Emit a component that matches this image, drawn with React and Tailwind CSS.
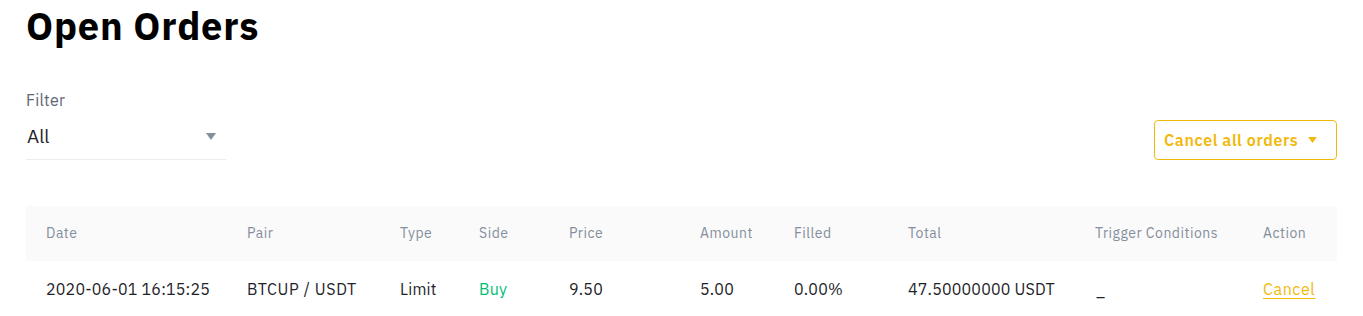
import React from "react";

const font = { fontFamily: '"IBM Plex Sans", "Open Sans", "Noto Sans", sans-serif' };

function Caret({ className }) {
  return (
    <svg viewBox="0 0 10 7" className={className} fill="currentColor">
      <path d="M0 0h10L5 7z" />
    </svg>
  );
}

const headers = ["Date", "Pair", "Type", "Side", "Price", "Amount", "Filled", "Total", "Trigger Conditions", "Action"];

export default function App() {
  return (
    <div className="bg-white w-[1363px] h-[316px] overflow-hidden px-[26px] font-['Open_Sans',sans-serif]" style={font}>
      <h1 className="pt-[2px] text-[38px] leading-[48px] font-bold text-[#000] tracking-[0.8px]">Open Orders</h1>
      <div className="mt-[40px] flex items-end justify-between">
        <div className="w-[200px]">
          <div className="text-[16px] leading-[20px] text-[#5e6673] tracking-[0.3px]">Filter</div>
          <div className="h-[50px] flex items-center justify-between border-b border-[#eaecef] pr-[10px] pt-[3px]">
            <span className="text-[19px] leading-[24px] text-[#1e2329] pl-[1px]">All</span>
            <Caret className="w-[10px] h-[7px] text-[#848e9c]" />
          </div>
        </div>
        <button className="h-[40px] w-[183px] border border-[#f0b90b] rounded-[4px] flex items-center pl-[9px] gap-[9px] text-[#f0b90b] text-[16px] font-semibold">
          <span className="tracking-[0.6px]">Cancel all orders</span>
          <Caret className="w-[9px] h-[6px] text-[#f0b90b] ml-[1px]" />
        </button>
      </div>
      <div className="mt-[46px]">
        <div className="grid grid-cols-[201px_153px_79px_90px_131px_94px_114px_187px_168px_1fr] px-[20px] h-[55px] items-center bg-[#fafafa] text-[14px] text-[#848e9c] tracking-[0.5px]">
          {headers.map((h) => (
            <div key={h}>{h}</div>
          ))}
        </div>
        <div className="grid grid-cols-[201px_153px_79px_90px_131px_94px_114px_187px_168px_1fr] px-[20px] h-[56px] items-center text-[16px] text-[#1e2329] tracking-[0.2px]">
          <div>2020-06-01 16:15:25</div>
          <div className="tracking-[0.6px]">BTCUP / USDT</div>
          <div>Limit</div>
          <div className="text-[#02c076]">Buy</div>
          <div>9.50</div>
          <div>5.00</div>
          <div>0.00%</div>
          <div>47.50000000 USDT</div>
          <div className="pl-[1px]">_</div>
          <div><a href="#" className="text-[#f0b90b] underline underline-offset-[3px] tracking-[0.6px]">Cancel</a></div>
        </div>
      </div>
    </div>
  );
}
